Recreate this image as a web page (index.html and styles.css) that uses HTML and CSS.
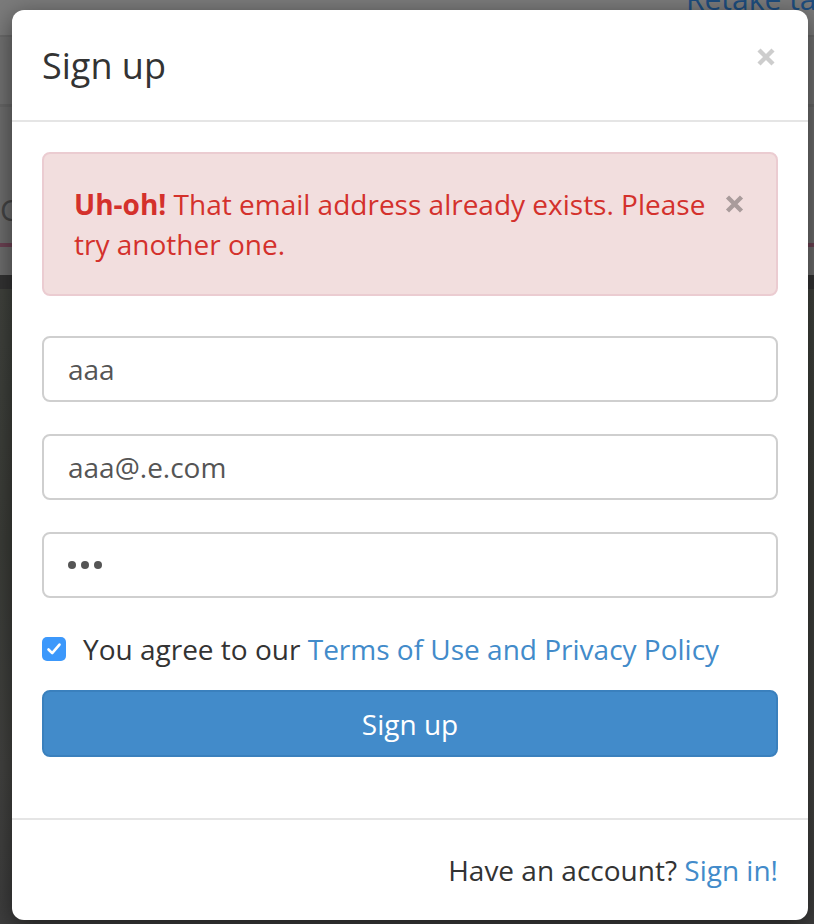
FILE: index.html
```html
<!DOCTYPE html>
<html>
<head>
<meta charset="utf-8">
<link rel="stylesheet" href="styles.css">
</head>
<body>
<div class="page">
  <div class="bg-top"><span class="bg-retake">Retake tab</span></div>
  <div class="bg-nav"></div>
  <div class="bg-band"><span class="bg-letter">C</span><div class="bg-rule"></div></div>
  <div class="bg-bar"></div>
  <div class="bg-photo"></div>
</div>

<div class="modal">
  <div class="modal-header">
    <h4 class="modal-title">Sign up</h4>
    <button class="close close-header" aria-label="Close">
      <svg width="18" height="18" viewBox="0 0 18 18"><path d="M2 2L16 16M16 2L2 16" stroke="currentColor" stroke-width="4.4" stroke-linecap="butt"/></svg>
    </button>
  </div>
  <div class="modal-body">
    <div class="alert">
      <div class="alert-text"><strong>Uh-oh!</strong> That email address already exists. Please try another one.</div>
      <button class="close close-alert" aria-label="Close">
        <svg width="19" height="18" viewBox="0 0 19 18"><path d="M2.5 2L16.5 16M16.5 2L2.5 16" stroke="currentColor" stroke-width="4.4" stroke-linecap="butt"/></svg>
      </button>
    </div>
    <div class="field">aaa</div>
    <div class="field">aaa@.e.com</div>
    <div class="field field-pass"><span class="dot"></span><span class="dot"></span><span class="dot"></span></div>
    <div class="agree">
      <span class="checkbox"><svg width="24" height="24" viewBox="0 0 24 24"><path d="M6.5 12.5L10.2 16.2L17.5 7.6" fill="none" stroke="#fff" stroke-width="2.6" stroke-linecap="round" stroke-linejoin="round"/></svg></span>
      <span class="agree-text">You agree to our <a class="link">Terms of Use and Privacy Policy</a></span>
    </div>
    <button class="btn-primary">Sign up</button>
  </div>
  <div class="modal-footer"><span>Have an account? <a class="link">Sign in!</a></span></div>
</div>
</body>
</html>
```
FILE: styles.css
```css
* { box-sizing: border-box; }
html, body { margin: 0; padding: 0; }
body {
  width: 814px;
  height: 924px;
  overflow: hidden;
  font-family: "Open Sans", "Noto Sans", sans-serif;
  background: #3f403c;
  position: relative;
}
.page { display: flex; flex-direction: column; height: 924px; }
.bg-top {
  height: 37px;
  background: #7b7b7b;
  border-bottom: 2px solid #6a6a6a;
  position: relative;
  overflow: hidden;
}
.bg-retake {
  position: absolute;
  left: 686px;
  top: -22px;
  font-size: 30px;
  color: #1d4d7e;
  white-space: nowrap;
}
.bg-nav {
  height: 70px;
  background: #717171;
  border-bottom: 3px solid #666;
}
.bg-band {
  height: 168px;
  background: #6d6d6d;
  padding-top: 88px;
  display: flex;
  flex-direction: column;
}
.bg-letter { font-size: 30px; color: #444; line-height: 30px; }
.bg-rule { height: 4px; background: #6b4152; margin-top: 18px; }
.bg-bar { height: 14px; background: #333; }
.bg-photo {
  flex: 1;
  background: linear-gradient(180deg, #40423d 0%, #3b3d38 40%, #424240 75%, #3e3e3e 100%);
}

.modal {
  position: absolute;
  left: 12px;
  top: 10px;
  width: 796px;
  height: 910px;
  background: #fff;
  border-radius: 12px;
  box-shadow: 0 6px 24px rgba(0, 0, 0, 0.5);
  display: flex;
  flex-direction: column;
  overflow: hidden;
}
.modal-header {
  display: flex;
  justify-content: space-between;
  align-items: flex-start;
  padding: 30px 30px 29px 30px;
  border-bottom: 2px solid #e5e5e5;
}
.modal-title {
  margin: 0;
  font-size: 36px;
  font-weight: 400;
  line-height: 51px;
  color: #333;
}
.close {
  border: 0;
  background: none;
  padding: 0;
  display: flex;
  cursor: pointer;
}
.close-header { color: #cdcdcd; margin-top: 8px; margin-right: 3px; }
.close-alert { color: rgba(0, 0, 0, 0.3); margin-top: 11px; margin-left: 18px; }

.modal-body {
  flex: 1;
  padding: 30px 30px 0 30px;
  display: flex;
  flex-direction: column;
}
.alert {
  display: flex;
  align-items: flex-start;
  background: #f2dede;
  border: 2px solid #ebccd1;
  border-radius: 8px;
  padding: 30px 32px 30px 30px;
  color: #d4312c;
  font-size: 28px;
  line-height: 40px;
  margin-bottom: 40px;
}
.alert-text { flex: 1; }
.alert-text strong { font-weight: 700; }

.field {
  height: 66px;
  border: 2px solid #cfcfcf;
  border-radius: 8px;
  padding: 0 24px;
  display: flex;
  align-items: center;
  font-size: 28px;
  color: #555;
  margin-bottom: 32px;
}
.field-pass { gap: 5px; margin-bottom: 31px; }
.dot { width: 8px; height: 8px; border-radius: 50%; background: #555; }

.agree {
  display: flex;
  align-items: center;
  height: 40px;
  margin-bottom: 21px;
}
.checkbox {
  width: 24px;
  height: 24px;
  border-radius: 5px;
  background: #3c98fb;
  display: flex;
  margin-right: 17px;
}
.agree-text { font-size: 28px; line-height: 40px; color: #333; }
.link { color: #428bca; text-decoration: none; }

.btn-primary {
  height: 67px;
  width: 100%;
  background: #428bca;
  border: 2px solid #3a80bd;
  border-radius: 8px;
  color: #fff;
  font-family: "Open Sans", "Noto Sans", sans-serif;
  font-size: 28px;
  line-height: 40px;
  padding: 0;
}

.modal-footer {
  height: 102px;
  border-top: 2px solid #e5e5e5;
  padding: 0 30px;
  display: flex;
  align-items: center;
  justify-content: flex-end;
  font-size: 28px;
  color: #333;
}
```
